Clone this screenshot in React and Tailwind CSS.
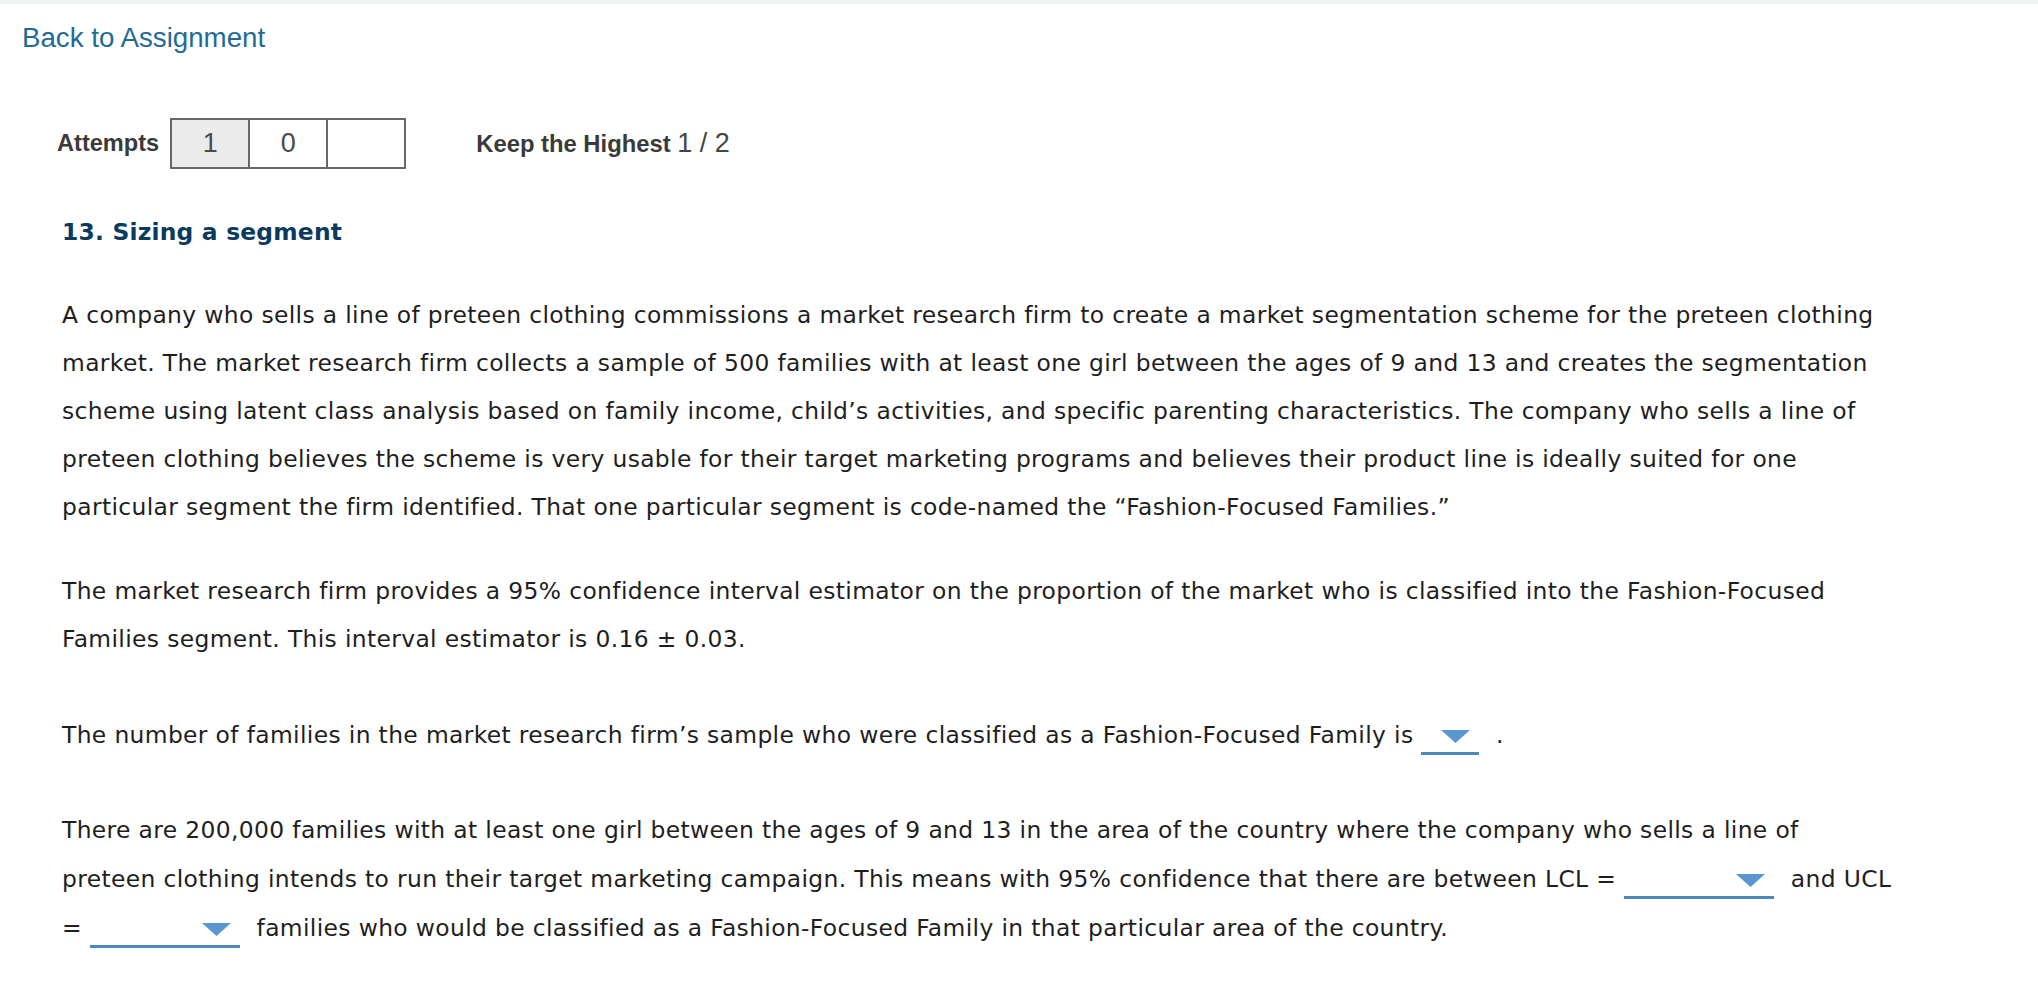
import React from "react";

function Dropdown({ width }) {
  return (
    <span
      className={`inline-block ${width} leading-none pb-1 mr-[9px] border-b-[3px] border-[#4d87c0] text-right pr-[9px] align-baseline`}
    >
      <svg
        className="inline-block align-baseline"
        width="29"
        height="13"
        viewBox="0 0 29 13"
      >
        <polygon points="0,0 29,0 14.5,13" fill="#5a96cf" />
      </svg>
    </span>
  );
}

function AttemptBox({ value, shaded, first }) {
  return (
    <div
      className={`w-[80px] h-[51px] border-2 border-[#686868] flex items-center justify-center text-[27px] leading-none text-[#4a4a4a] ${
        shaded ? "bg-[#ebebeb]" : "bg-white"
      } ${first ? "" : "-ml-[2px]"}`}
    >
      {value}
    </div>
  );
}

export default function App() {
  return (
    <div className="min-h-screen bg-white w-[2038px]">
      {/* top strip */}
      <div className="h-[4px] bg-[#eef2f2]"></div>

      <div className="pt-[20px] pl-[22px]">
        <a
          href="#"
          className="text-[27.7px] leading-none text-[#1f6b96] font-['Liberation_Sans',Arial,sans-serif]"
        >
          Back to Assignment
        </a>
      </div>

      {/* attempts row */}
      <div className="mt-[65px] pl-[57px] flex items-center font-['Liberation_Sans',Arial,sans-serif] text-[#3a3a3a]">
        <span className="text-[23.6px] leading-none font-bold mr-[11px]">
          Attempts
        </span>
        <div className="flex">
          <AttemptBox value="1" shaded first />
          <AttemptBox value="0" />
          <AttemptBox value="" />
        </div>
        <span className="ml-[70px] text-[23.8px] leading-none">
          <span className="font-bold">Keep the Highest</span>{" "}
          <span className="text-[27px] text-[#444]">1 / 2</span>
        </span>
      </div>

      <div className="pl-[62px] w-[1896px] font-['DejaVu_Sans',Verdana,sans-serif] text-[23.4px] text-[#1e1e1e]">
        <h2 className="mt-[52px] leading-none font-bold tracking-[0.2px] text-[#0a3a5e]">
          13. Sizing a segment
        </h2>

        <div className="tracking-[0.36px]">
          <p className="mt-[47px] leading-[48px]">
            A company who sells a line of preteen clothing commissions a market
            research firm to create a market segmentation scheme for the preteen
            clothing market. The market research firm collects a sample of 500
            families with at least one girl between the ages of 9 and 13 and
            creates the segmentation scheme using latent class analysis based on
            family income, child’s activities, and specific parenting
            characteristics. The company who sells a line of preteen clothing
            believes the scheme is very usable for their target marketing
            programs and believes their product line is ideally suited for one
            particular segment the firm identified. That one particular segment
            is code-named the “Fashion-Focused Families.”
          </p>

          <p className="mt-[36px] leading-[48px]">
            The market research firm provides a 95% confidence interval
            estimator on the proportion of the market who is classified into the
            Fashion-Focused Families segment. This interval estimator is 0.16 ±
            0.03.
          </p>

          <p className="mt-[48px] leading-[48px]">
            The number of families in the market research firm’s sample who were
            classified as a Fashion-Focused Family is{" "}
            <Dropdown width="w-[58px]" /> .
          </p>

          <p className="mt-[47px] leading-[49px]">
            There are 200,000 families with at least one girl between the ages
            of 9 and 13 in the area of the country where the company who sells a
            line of preteen clothing intends to run their target marketing
            campaign. This means with 95% confidence that there are between LCL
            = <Dropdown width="w-[150px]" /> and UCL ={" "}
            <Dropdown width="w-[150px]" /> families who would be classified as a
            Fashion-Focused Family in that particular area of the country.
          </p>
        </div>
      </div>
    </div>
  );
}
